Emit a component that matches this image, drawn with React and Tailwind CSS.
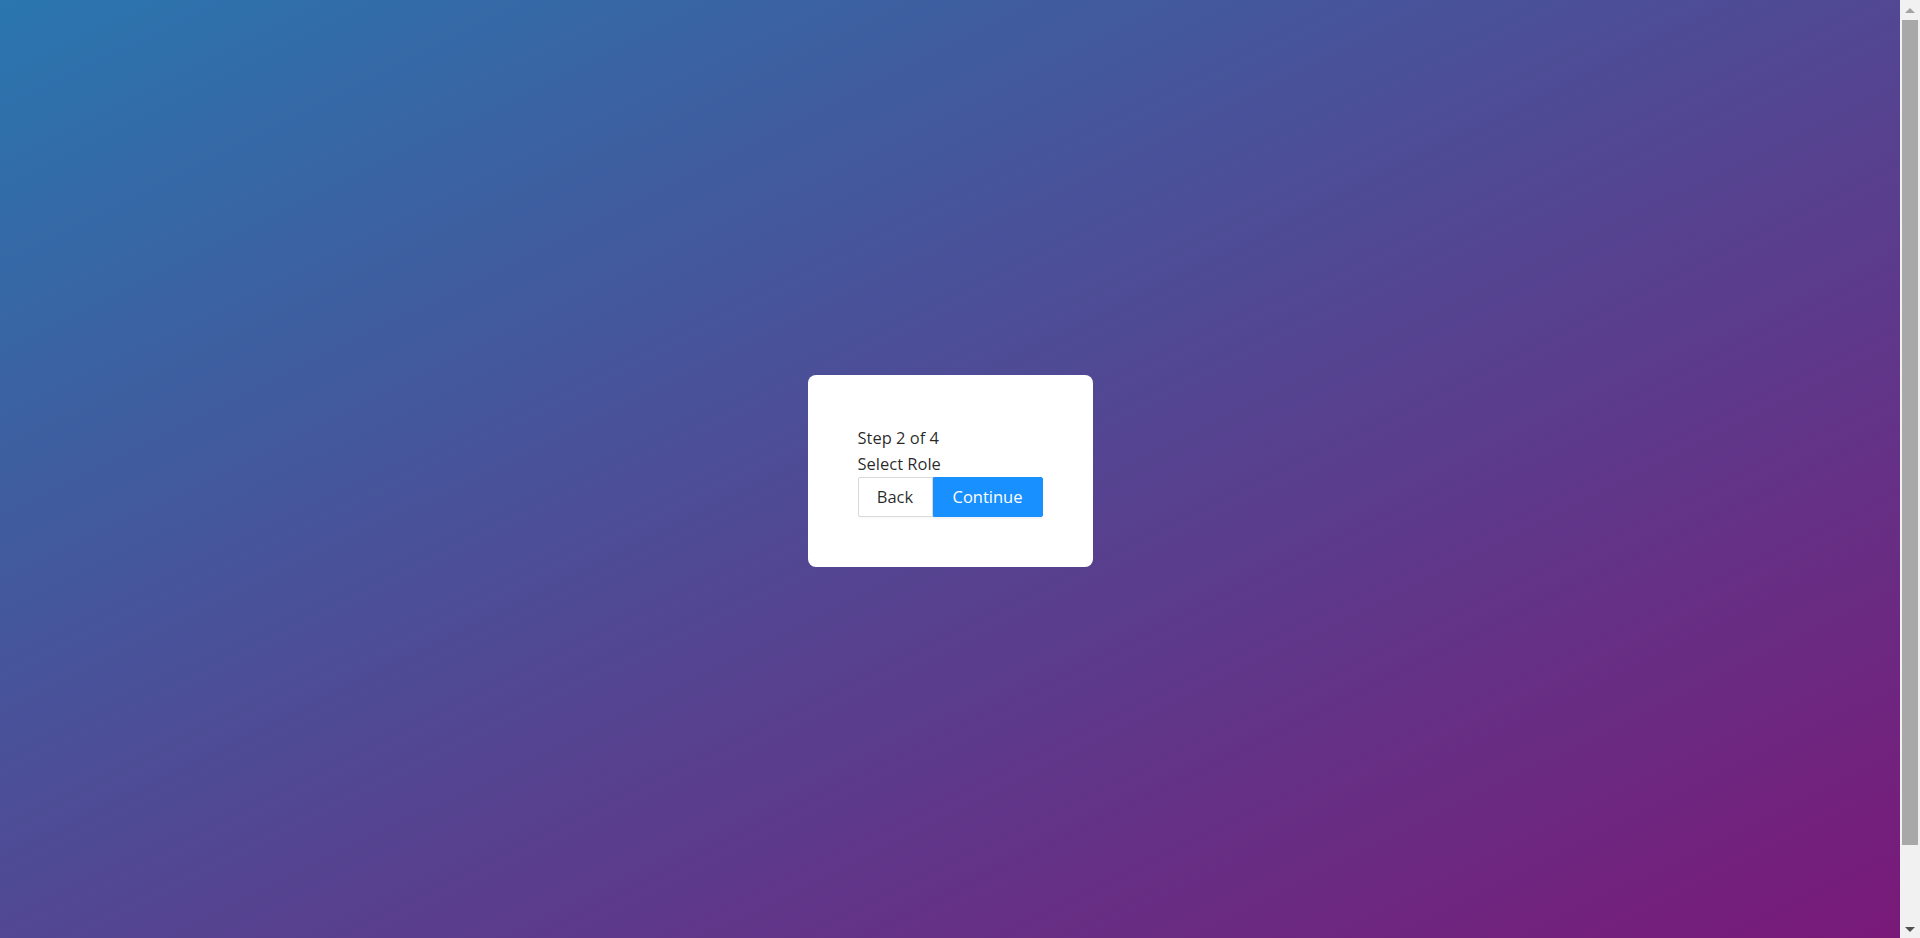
export default function App() {
  return (
    <div
      className="flex h-screen overflow-hidden"
      style={{ fontFamily: '"Open Sans", "Noto Sans", sans-serif' }}
    >
      <div className="flex flex-1 items-center justify-center bg-linear-to-br/srgb from-[#2a76ae] to-[#791978] pt-[4px]">
        <div className="rounded-[8px] bg-white p-[50px]">
          <div className="text-[16.5px] leading-[26px] text-[rgba(0,0,0,0.85)]">Step 2 of 4</div>
          <div className="text-[16.5px] leading-[26px] text-[rgba(0,0,0,0.85)]">Select Role</div>
          <div className="flex">
            <button className="h-[40px] w-[75px] rounded-l-[2px] border border-[#d9d9d9] bg-white text-[16.5px] text-[rgba(0,0,0,0.85)] shadow-[0_2px_0_rgba(0,0,0,0.015)]">
              Back
            </button>
            <button className="h-[40px] w-[110px] rounded-r-[2px] border border-[#1890ff] bg-[#1890ff] text-[16.5px] text-white shadow-[0_2px_0_rgba(0,0,0,0.045)]">
              Continue
            </button>
          </div>
        </div>
      </div>
      <div className="flex w-[20px] flex-col items-center bg-[#f1f1f1]">
        <div className="flex h-[20px] w-full items-center justify-center">
          <svg width="10" height="6" viewBox="0 0 10 6">
            <path d="M0 6 L5 1 L10 6 Z" fill="#a3a3a3" />
          </svg>
        </div>
        <div className="h-[825px] w-[16px] bg-[#a8a8a8]" />
        <div className="flex-1" />
        <div className="flex h-[17px] w-full items-center justify-center">
          <svg width="10" height="6" viewBox="0 0 10 6">
            <path d="M0 0 L10 0 L5 5 Z" fill="#505050" />
          </svg>
        </div>
      </div>
    </div>
  );
}
